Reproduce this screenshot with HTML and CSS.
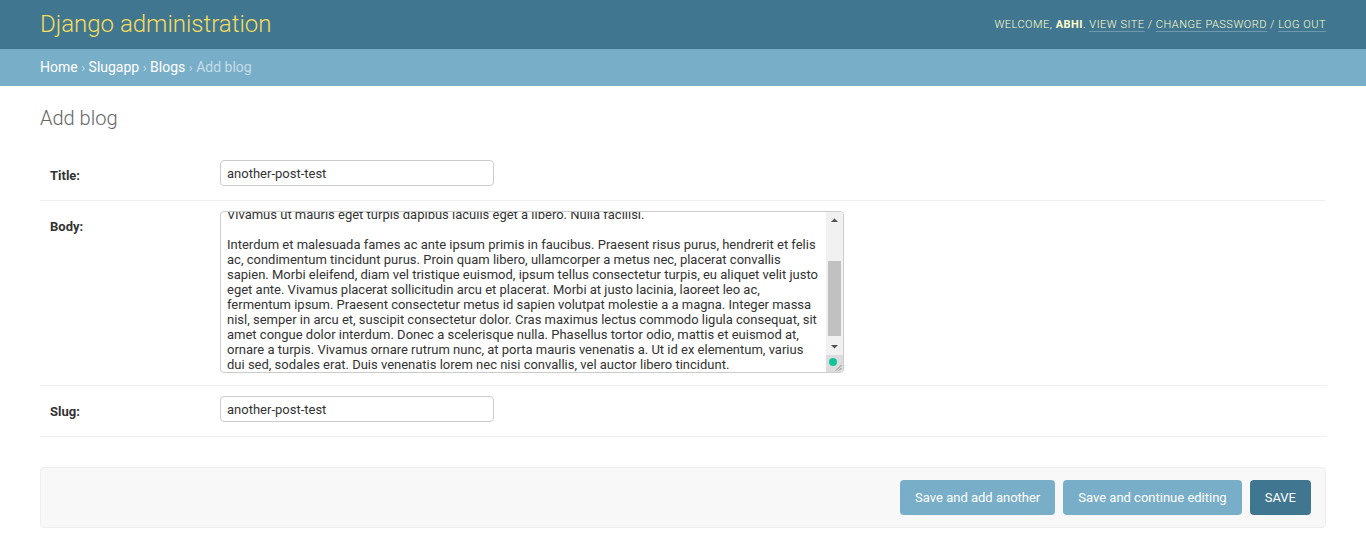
FILE: index.html
```html
<!DOCTYPE html>
<html lang="en">
<head>
<meta charset="utf-8">
<title>Add blog | Django site admin</title>
<link rel="stylesheet" href="styles.css">
</head>
<body>
<div class="header">
  <h1 class="branding">Django administration</h1>
  <div class="user-tools">Welcome, <strong>abhi</strong>. <a href="#">View site</a> / <a href="#">Change password</a> / <a href="#">Log out</a></div>
</div>
<div class="breadcrumbs"><a href="#">Home</a> <span class="sep">›</span> <a href="#">Slugapp</a> <span class="sep">›</span> <a href="#">Blogs</a> <span class="sep">›</span> Add blog</div>
<div class="content">
  <h1 class="title">Add blog</h1>
  <form class="form">
    <fieldset class="module">
      <div class="form-row">
        <label class="label">Title:</label>
        <input class="text-input" type="text" value="another-post-test">
      </div>
      <div class="form-row form-row--tall">
        <label class="label">Body:</label>
        <div class="textarea">
          <div class="textarea-text">
            <div class="tline">Vivamus ut mauris eget turpis dapibus iaculis eget a libero. Nulla facilisi.</div>
            <div class="tline">&nbsp;</div>
            <div class="tline">Interdum et malesuada fames ac ante ipsum primis in faucibus. Praesent risus purus, hendrerit et felis</div>
            <div class="tline">ac, condimentum tincidunt purus. Proin quam libero, ullamcorper a metus nec, placerat convallis</div>
            <div class="tline">sapien. Morbi eleifend, diam vel tristique euismod, ipsum tellus consectetur turpis, eu aliquet velit justo</div>
            <div class="tline">eget ante. Vivamus placerat sollicitudin arcu et placerat. Morbi at justo lacinia, laoreet leo ac,</div>
            <div class="tline">fermentum ipsum. Praesent consectetur metus id sapien volutpat molestie a a magna. Integer massa</div>
            <div class="tline">nisl, semper in arcu et, suscipit consectetur dolor. Cras maximus lectus commodo ligula consequat, sit</div>
            <div class="tline">amet congue dolor interdum. Donec a scelerisque nulla. Phasellus tortor odio, mattis et euismod at,</div>
            <div class="tline">ornare a turpis. Vivamus ornare rutrum nunc, at porta mauris venenatis a. Ut id ex elementum, varius</div>
            <div class="tline">dui sed, sodales erat. Duis venenatis lorem nec nisi convallis, vel auctor libero tincidunt.</div>
          </div>
          <div class="scrollbar">
            <div class="sb-btn"><svg width="17" height="17" viewBox="0 0 17 17"><path d="M5 10 L8.5 6.5 L12 10 Z" fill="#505050"/></svg></div>
            <div class="sb-track"><div class="sb-thumb"></div></div>
            <div class="sb-btn"><svg width="17" height="17" viewBox="0 0 17 17"><path d="M5 7 L8.5 10.5 L12 7 Z" fill="#505050"/></svg></div>
            <div class="sb-corner">
              <span class="g-dot"></span>
              <svg class="grip" width="17" height="17" viewBox="0 0 17 17"><path d="M15.5 10 L10 15.5 M15.5 13 L13 15.5" stroke="#888" stroke-width="1" fill="none"/></svg>
            </div>
          </div>
        </div>
      </div>
      <div class="form-row">
        <label class="label">Slug:</label>
        <input class="text-input" type="text" value="another-post-test">
      </div>
    </fieldset>
    <div class="submit-row">
      <button type="button" class="btn">Save and add another</button>
      <button type="button" class="btn">Save and continue editing</button>
      <button type="button" class="btn btn-default">Save</button>
    </div>
  </form>
</div>
</body>
</html>
```
FILE: styles.css
```css
html, body {
  margin: 0;
  padding: 0;
}
body {
  font-family: Roboto, "Liberation Sans", Arial, sans-serif;
  font-size: 14px;
  color: #333;
  background: #fff;
}
a {
  text-decoration: none;
}
.header {
  display: flex;
  justify-content: space-between;
  align-items: center;
  padding: 10px 40px;
  background: #417690;
  color: #ffc;
}
.branding {
  margin: 0;
  font-weight: 300;
  font-size: 24px;
  line-height: 29px;
  color: #f5dd5d;
}
.user-tools {
  font-size: 11px;
  font-weight: 300;
  letter-spacing: 0.5px;
  text-transform: uppercase;
  color: #ffc;
}
.user-tools strong {
  font-weight: 700;
}
.user-tools a {
  color: #ffc;
  border-bottom: 1px solid rgba(255, 255, 255, 0.25);
}
.breadcrumbs {
  background: #79aec8;
  padding: 10px 40px;
  font-size: 14px;
  line-height: 16px;
  color: #c4dce8;
}
.breadcrumbs a {
  color: #fff;
}
.breadcrumbs .sep {
  color: #c4dce8;
  font-size: 13px;
}
.content {
  padding: 20px 40px;
}
.title {
  margin: 0 0 20px;
  font-weight: 300;
  font-size: 20px;
  line-height: 24px;
  color: #666;
}
.form {
  margin: 0;
}
.module {
  margin: 0 0 30px;
  padding: 0;
  border: none;
  min-width: 0;
}
.form-row {
  display: flex;
  align-items: flex-start;
  padding: 10px 10px 14px;
  border-bottom: 1px solid #eee;
  font-size: 13px;
}
.form-row--tall {
  padding-bottom: 12px;
}
.label {
  flex: 0 0 160px;
  padding: 9px 10px 0 0;
  font-size: 13px;
  line-height: 13px;
  font-weight: 700;
  color: #333;
}
.text-input {
  box-sizing: border-box;
  width: 274px;
  height: 26px;
  margin: 0;
  padding: 5px 6px;
  border: 1px solid #ccc;
  border-radius: 4px;
  font-family: Roboto, "Liberation Sans", Arial, sans-serif;
  font-size: 13px;
  color: #333;
  background: #fff;
}
.textarea {
  box-sizing: border-box;
  width: 624px;
  height: 162px;
  border: 1px solid #ccc;
  border-radius: 4px;
  display: flex;
  overflow: hidden;
  background: #fff;
}
.textarea-text {
  flex: 1;
  overflow: hidden;
  padding: 0 6px;
  font-size: 13px;
  line-height: 15px;
  color: #333;
}
.textarea-text .tline:first-child {
  margin-top: -5.5px;
}
.tline {
  white-space: nowrap;
}
.scrollbar {
  flex: 0 0 17px;
  display: flex;
  flex-direction: column;
  background: #f1f1f1;
}
.sb-btn {
  height: 17px;
  flex: 0 0 17px;
}
.sb-btn svg {
  display: block;
}
.sb-track {
  flex: 1;
  padding: 32px 2px 0;
}
.sb-thumb {
  height: 75px;
  background: #c1c1c1;
}
.sb-corner {
  flex: 0 0 17px;
  position: relative;
  background: #dcdcdc;
}
.g-dot {
  position: absolute;
  left: 3px;
  top: 3px;
  width: 8px;
  height: 8px;
  border-radius: 50%;
  background: #15c39a;
}
.grip {
  position: absolute;
  left: 0;
  top: 0;
}
.submit-row {
  display: flex;
  justify-content: flex-end;
  gap: 8px;
  padding: 12px 14px;
  background: #f8f8f8;
  border: 1px solid #eee;
  border-radius: 4px;
  margin-bottom: 20px;
}
.btn {
  height: 35px;
  padding: 10px 15px;
  border: none;
  border-radius: 4px;
  background: #79aec8;
  color: #fff;
  font-family: Roboto, "Liberation Sans", Arial, sans-serif;
  font-size: 13px;
  line-height: 15px;
  cursor: pointer;
}
.btn-default {
  background: #417690;
  text-transform: uppercase;
}
```
